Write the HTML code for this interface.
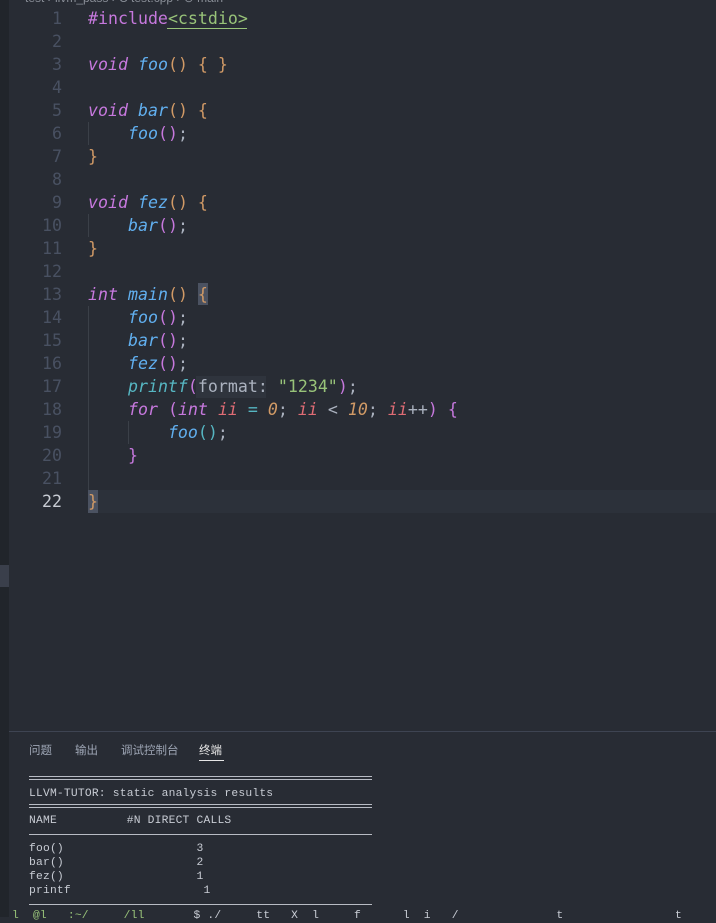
<!DOCTYPE html>
<html><head><meta charset="utf-8"><style>
body{margin:0;width:716px;height:917px;background:#282c34;overflow:hidden;position:relative;font-family:"DejaVu Sans Mono",monospace}
.strip{position:absolute;left:0;top:0;width:9px;height:917px;background:#21252b}
.ln{position:absolute;left:9px;width:53px;text-align:right;color:#495162;font-size:16.6px;line-height:23px;font-family:"DejaVu Sans Mono",monospace}
.code{position:absolute;left:88px;font-size:16.6px;line-height:23px;white-space:pre;color:#abb2bf}
.k{color:#c678dd;font-style:italic}.f{color:#61afef;font-style:italic}.p{color:#d19a66}.s{color:#98c379}.r{color:#e06c75;font-style:italic}.c{color:#56b6c2}.m{color:#c678dd}
.guide{position:absolute;width:1px;background:#3b4048}
.term{position:absolute;left:29px;font-family:"Liberation Mono",monospace;font-size:11.3px;letter-spacing:0.2px;color:#c8ccd4;white-space:pre;line-height:14px}
.hr{position:absolute;left:29px;width:343px;height:1px;background:#b8bcc4}
.tab{position:absolute;top:742px;font-family:'Liberation Sans','Noto Sans CJK SC',sans-serif;font-size:11.5px;color:#9da5b4}
</style></head><body>
<div class="strip"></div>
<div style="position:absolute;left:25px;top:-9px;font-family:'Liberation Sans',sans-serif;font-size:12px;color:#8a8f98">test › llvm_pass › C test.cpp › ⊚ main</div>
<div style="position:absolute;left:88px;top:490px;width:628px;height:23px;background:#2c313a"></div>
<div style="position:absolute;left:198px;top:283px;width:10px;height:22px;background:#4b5261"></div>
<div style="position:absolute;left:88px;top:490px;width:10px;height:23px;background:#4b5261"></div>
<div style="position:absolute;left:196px;top:376px;width:70px;height:22px;background:#2f343d"></div>
<div style="position:absolute;left:167px;top:28px;width:80px;height:1px;background:#98c379"></div>
<div class="guide" style="left:88px;top:122px;height:23px"></div>
<div class="guide" style="left:88px;top:214px;height:23px"></div>
<div class="guide" style="left:88px;top:306px;height:184px"></div>
<div class="guide" style="left:128px;top:421px;height:23px"></div>
<div style="position:absolute;left:0;top:565px;width:9px;height:22px;background:#3a3f4b"></div>
<div class="ln" style="top:7px">1<br>2<br>3<br>4<br>5<br>6<br>7<br>8<br>9<br>10<br>11<br>12<br>13<br>14<br>15<br>16<br>17<br>18<br>19<br>20<br>21<br><span style="color:#c8ccd4">22</span></div>
<div class="code" style="top:7px"><span class="m">#include</span><span class="s">&lt;cstdio&gt;</span>

<span class="k">void</span> <span class="f">foo</span><span class="p">() { }</span>

<span class="k">void</span> <span class="f">bar</span><span class="p">() {</span>
    <span class="f">foo</span><span class="m">()</span>;
<span class="p">}</span>

<span class="k">void</span> <span class="f">fez</span><span class="p">() {</span>
    <span class="f">bar</span><span class="m">()</span>;
<span class="p">}</span>

<span class="k">int</span> <span class="f">main</span><span class="p">() {</span>
    <span class="f">foo</span><span class="m">()</span>;
    <span class="f">bar</span><span class="m">()</span>;
    <span class="f">fez</span><span class="m">()</span>;
    <span class="c" style="font-style:italic">printf</span><span class="m">(</span>format: <span class="s">"1234"</span><span class="m">)</span>;
    <span class="k">for</span> <span class="m">(</span><span class="k">int</span> <span class="r">ii</span> <span class="c">=</span> <span class="p" style="font-style:italic">0</span>; <span class="r">ii</span> &lt; <span class="p" style="font-style:italic">10</span>; <span class="r">ii</span>++<span class="m">)</span> <span class="m">{</span>
        <span class="f">foo</span><span class="c">()</span>;
    <span class="m">}</span>

<span class="p">}</span></div>
<div style="position:absolute;left:9px;top:731px;width:707px;height:1px;background:#3e4452"></div>
<div class="tab" style="left:29px">问题</div>
<div class="tab" style="left:75px">输出</div>
<div class="tab" style="left:121px">调试控制台</div>
<div class="tab" style="left:199px;color:#e6e6e6">终端</div>
<div style="position:absolute;left:199px;top:760px;width:25px;height:1px;background:#e6e6e6"></div>
<div class="hr" style="top:776px"></div><div class="hr" style="top:779px"></div>
<div class="term" style="top:787px">LLVM-TUTOR: static analysis results</div>
<div class="hr" style="top:804px"></div><div class="hr" style="top:807px"></div>
<div class="term" style="top:814px">NAME          #N DIRECT CALLS</div>
<div class="hr" style="top:834px"></div>
<div class="term" style="top:842px">foo()                   3
bar()                   2
fez()                   1
printf                   1</div>
<div class="hr" style="top:904px"></div>
<div class="term" style="top:909px;left:12px;color:#98c379">l  @l   :~/     /ll       <span style="color:#c8ccd4">$ ./     tt   X  l     f      l  i   /              t                t</span></div>
</body></html>
